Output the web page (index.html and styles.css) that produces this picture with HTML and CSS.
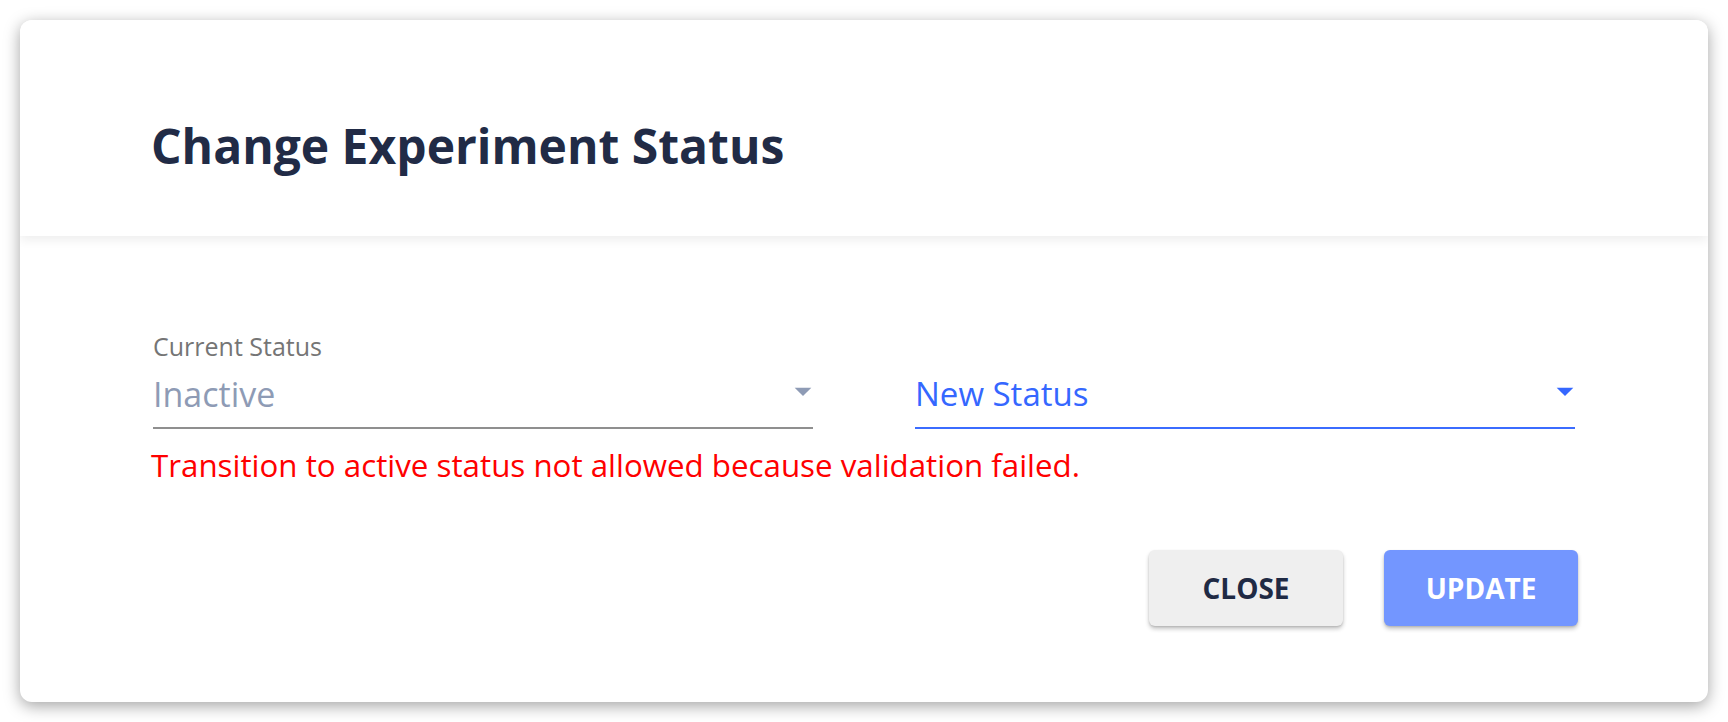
FILE: index.html
```html
<!DOCTYPE html>
<html lang="en">
<head>
<meta charset="utf-8">
<title>Change Experiment Status</title>
<link rel="stylesheet" href="styles.css">
</head>
<body>
<div class="dialog">
  <div class="dialog-header">
    <h1 class="dialog-title">Change Experiment Status</h1>
  </div>
  <div class="dialog-body">
    <div class="fields">
      <div class="field">
        <div class="field-label">Current Status</div>
        <div class="field-input field-input--disabled">
          <span class="field-value">Inactive</span>
          <svg class="field-arrow" viewBox="0 0 24 24" width="40" height="40"><path d="M7 10l5 5 5-5z" fill="currentColor"/></svg>
        </div>
      </div>
      <div class="field">
        <div class="field-label field-label--empty"></div>
        <div class="field-input field-input--active">
          <span class="field-value">New Status</span>
          <svg class="field-arrow" viewBox="0 0 24 24" width="40" height="40"><path d="M7 10l5 5 5-5z" fill="currentColor"/></svg>
        </div>
      </div>
    </div>
    <p class="error-text">Transition to active status not allowed because validation failed.</p>
    <div class="actions">
      <button class="btn btn--close">CLOSE</button>
      <button class="btn btn--update">UPDATE</button>
    </div>
  </div>
</div>
</body>
</html>
```

FILE: styles.css
```css
* { box-sizing: border-box; }

html, body {
  margin: 0;
  background: #ffffff;
}

body {
  padding: 20px;
  font-family: "Open Sans", "Noto Sans", sans-serif;
}

.dialog {
  width: 1688px;
  height: 682px;
  background: #ffffff;
  border-radius: 12px;
  box-shadow: 0 4px 16px rgba(0, 0, 0, 0.36);
  overflow: hidden;
  display: flex;
  flex-direction: column;
}

.dialog-header {
  height: 216px;
  padding: 94px 133px 0 131px;
  background: #ffffff;
  box-shadow: 0 4px 10px rgba(0, 0, 0, 0.07);
  position: relative;
  z-index: 1;
  flex-shrink: 0;
}

.dialog-title {
  margin: 0;
  font-size: 48px;
  line-height: 64px;
  font-weight: 700;
  color: #212b46;
}

.dialog-body {
  flex: 1;
  padding: 96px 133px 0 133px;
  display: flex;
  flex-direction: column;
}

.fields {
  display: flex;
  gap: 102px;
}

.field {
  flex: 1;
  display: flex;
  flex-direction: column;
}

.field-label {
  font-size: 25px;
  line-height: 28px;
  height: 28px;
  color: #757575;
}

.field-input {
  margin-top: 14px;
  height: 55px;
  display: flex;
  align-items: flex-start;
  justify-content: space-between;
  border-bottom: 2px solid #8f8f8f;
}

.field-value {
  font-size: 33px;
  line-height: 40px;
}

.field-input--disabled .field-value {
  font-size: 34px;
}

.field-arrow {
  margin-top: -3px;
  margin-right: -10px;
}

.field-input--disabled .field-value,
.field-input--disabled .field-arrow {
  color: #8e9bb5;
}

.field-input--active {
  border-bottom-color: #3b6cff;
}

.field-input--active .field-value,
.field-input--active .field-arrow {
  color: #3567ff;
}

.error-text {
  margin: 18px 0 0 -2px;
  font-size: 31.3px;
  line-height: 36px;
  font-weight: 500;
  color: #ff0000;
}

.actions {
  margin-top: 67px;
  margin-right: -3px;
  display: flex;
  justify-content: flex-end;
  gap: 41px;
}

.btn {
  width: 194px;
  height: 76px;
  border: none;
  border-radius: 6px;
  font-family: "Open Sans", "Noto Sans", sans-serif;
  font-size: 28px;
  font-weight: 700;
  box-shadow: 0 3px 4px rgba(0, 0, 0, 0.22), 0 1px 2px rgba(0, 0, 0, 0.12);
  cursor: pointer;
}

.btn--close {
  background: #efefef;
  color: #1f2a44;
}

.btn--update {
  background: #7396ff;
  color: #ffffff;
}
```
